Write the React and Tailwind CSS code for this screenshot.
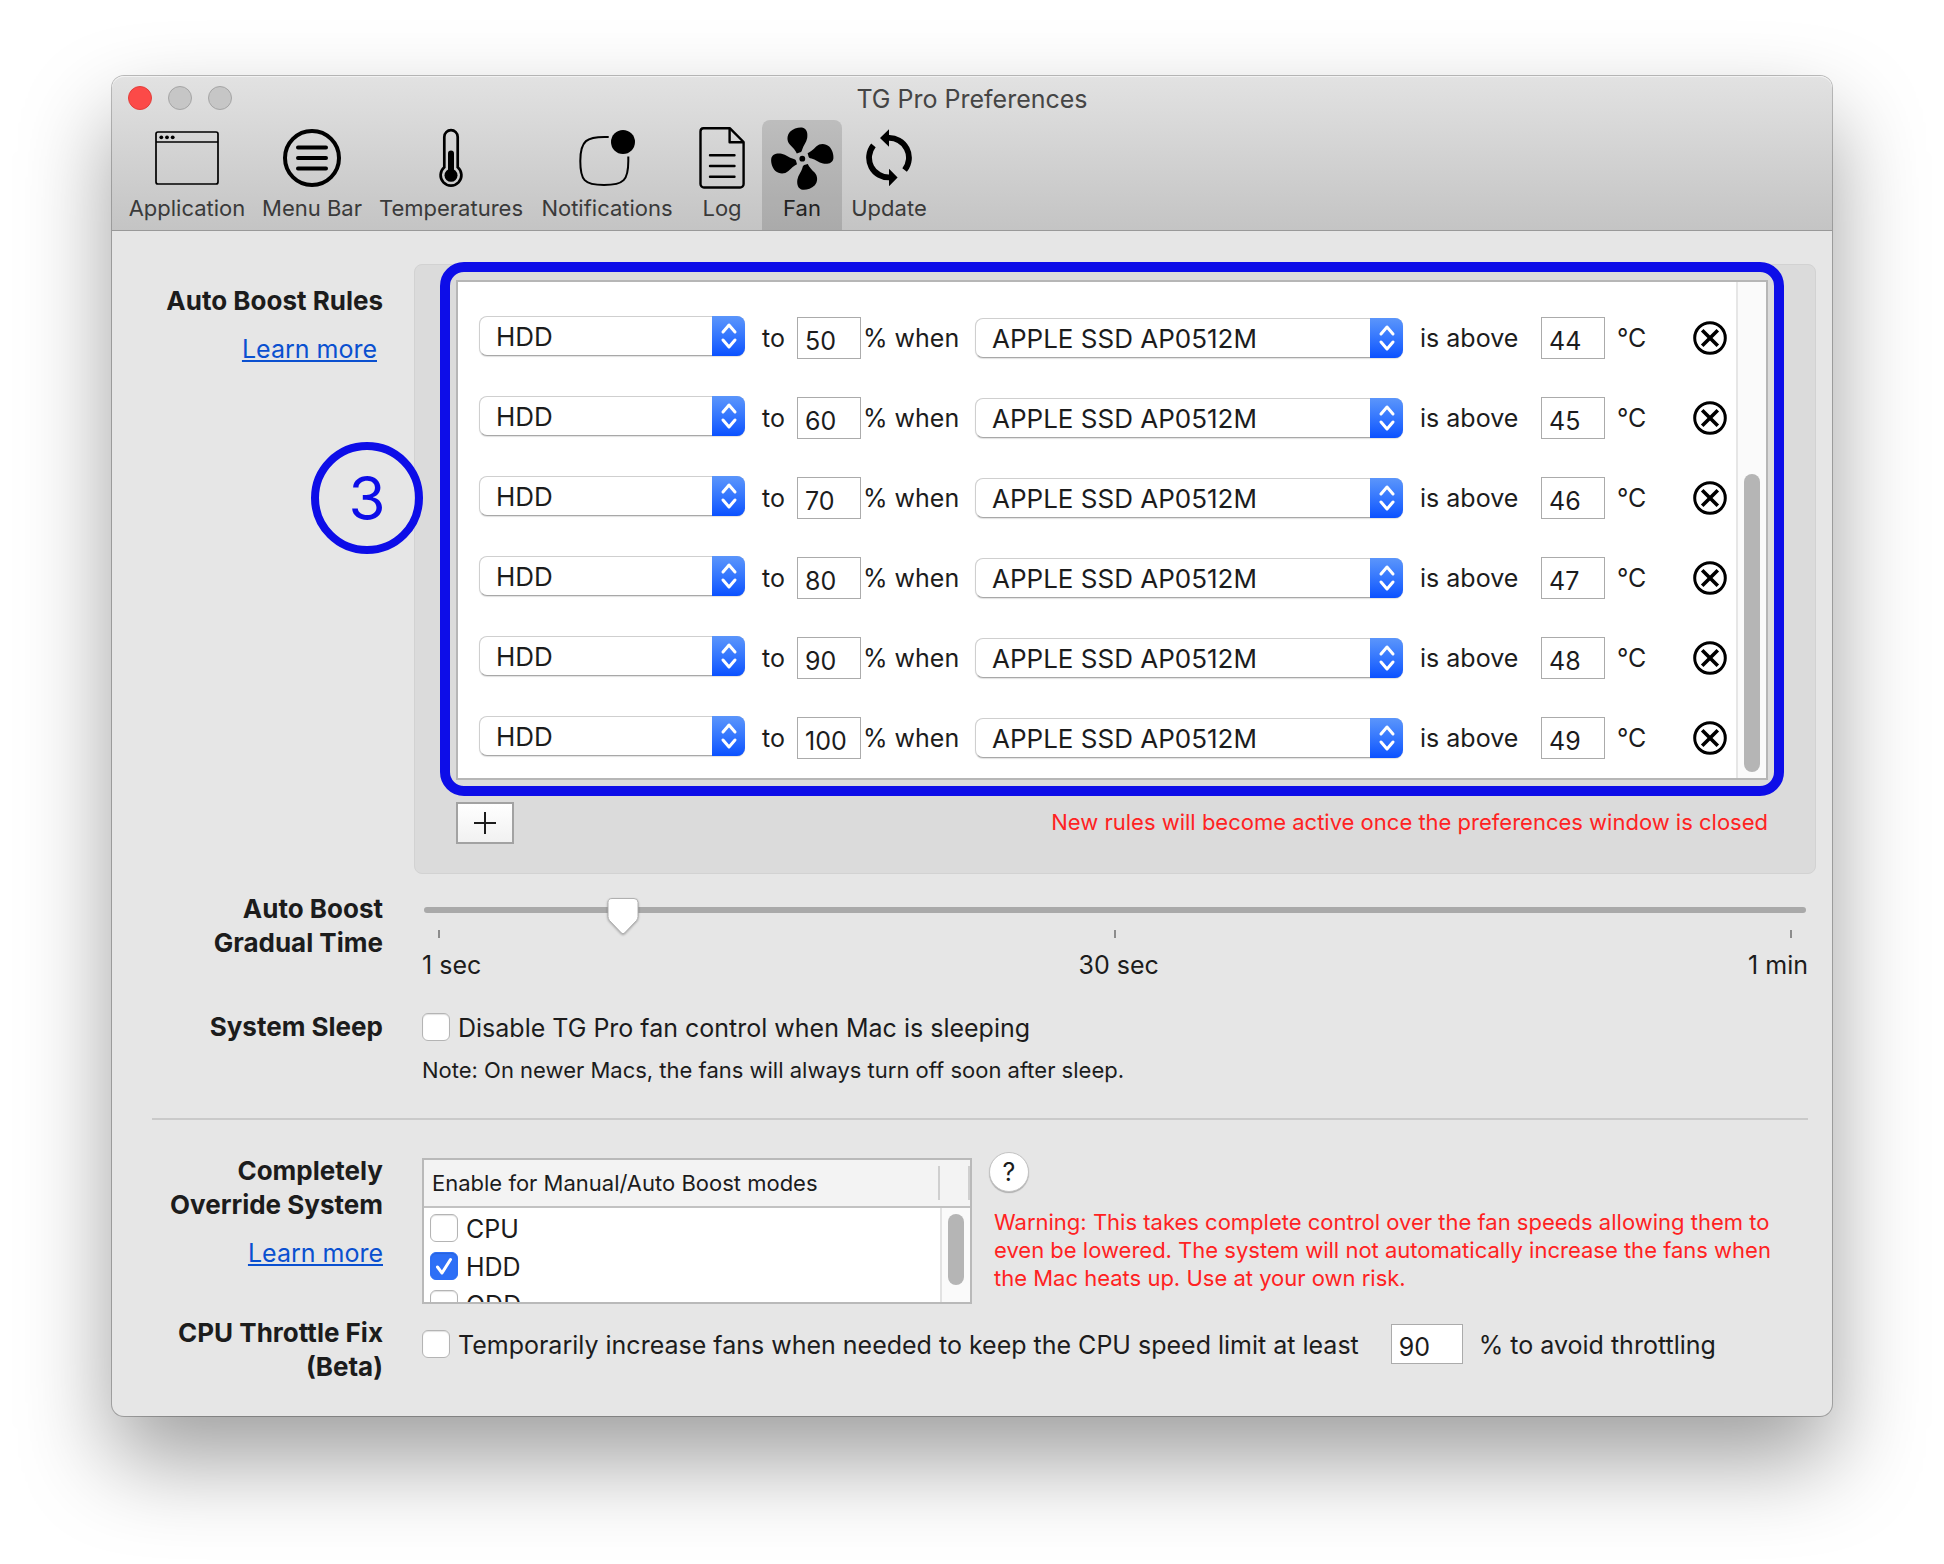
import React, { useState } from 'react';

const initialRules = [
    { id: 1, fan: "HDD", percent: "50", sensor: "APPLE SSD AP0512M", temp: "44" },
    { id: 2, fan: "HDD", percent: "60", sensor: "APPLE SSD AP0512M", temp: "45" },
    { id: 3, fan: "HDD", percent: "70", sensor: "APPLE SSD AP0512M", temp: "46" },
    { id: 4, fan: "HDD", percent: "80", sensor: "APPLE SSD AP0512M", temp: "47" },
    { id: 5, fan: "HDD", percent: "90", sensor: "APPLE SSD AP0512M", temp: "48" },
    { id: 6, fan: "HDD", percent: "100", sensor: "APPLE SSD AP0512M", temp: "49" }
];

const ApplicationIcon = () => (
    <svg width="64" height="56" viewBox="0 0 64 56" fill="none" stroke="black" strokeWidth="1.7">
        <rect x="1" y="2" width="62" height="52" rx="2" />
        <path d="M1 12h62" />
        <g fill="black" stroke="none">
            <circle cx="6.3" cy="7.3" r="1.9" />
            <circle cx="12" cy="7.3" r="1.9" />
            <circle cx="17.7" cy="7.3" r="1.9" />
        </g>
    </svg>
);

const MenuBarIcon = () => (
    <svg width="60" height="60" viewBox="0 0 60 60" fill="none" stroke="black" strokeWidth="4" strokeLinecap="round">
        <circle cx="30" cy="30" r="27" />
        <path d="M16 19.5h28M16 30h28M16 40.5h28" />
    </svg>
);

const TemperaturesIcon = () => (
    <svg width="26" height="60" viewBox="0 0 26 60" fill="none" stroke="black" strokeWidth="2.7">
        <path d="M6.3 39.3V8.9a6.7 6.7 0 0 1 13.4 0V39.3A10.4 10.4 0 1 1 6.3 39.3z" />
        <path d="M13 25.5V46" strokeWidth="6" strokeLinecap="round" />
        <circle cx="13" cy="47.3" r="6.5" fill="black" stroke="none" />
    </svg>
);

const NotificationsIcon = () => (
    <svg width="58" height="60" viewBox="0 0 58 60" fill="none" stroke="black" strokeWidth="2">
        <path d="M30.7 9C8 8 2.3 13 2.3 33C2.3 52 6 57 26 57C46 57 50.3 52 50.3 33V28.5" />
        <circle cx="45" cy="14" r="12" fill="black" stroke="none" />
    </svg>
);

const LogIcon = () => (
    <svg width="48" height="64" viewBox="0 0 48 64" fill="none" stroke="black" strokeWidth="2.4" strokeLinejoin="round">
        <path d="M5.5 2.3H32L45.6 16V58a3.5 3.5 0 0 1-3.5 3.5H6A3.5 3.5 0 0 1 2.5 58V5.5A3.2 3.2 0 0 1 5.5 2.3z" />
        <path d="M31.6 2.3V16.2H45.6" />
        <path d="M12 29.3h24.5M12 40h24.5M12 50.7h24.5" strokeLinecap="round" />
    </svg>
);

const blade = "M26.8 27.4C25.5 24.5 23 21.8 20 18.8C16.5 15 16.8 9.5 20 5.8C23 2.6 28.5 1.2 32 1.6C36.5 2.4 38 6.5 37.2 12C36.4 16.5 33.2 19.5 32.2 23.5C31.8 25.5 31 26.4 29.5 26.6z";

const FanIcon = () => (
    <svg width="64" height="64" viewBox="0 0 64 64" fill="black">
        <path d={blade} />
        <path d={blade} transform="rotate(90 32.3 32.7)" />
        <path d={blade} transform="rotate(180 32.3 32.7)" />
        <path d={blade} transform="rotate(270 32.3 32.7)" />
        <circle cx="32.3" cy="32.7" r="2.9" />
    </svg>
);

const UpdateIcon = () => (
    <svg width="46" height="60" viewBox="0 0 46 60">
        <g fill="none" stroke="black" strokeWidth="5.8">
            <path d="M22 10A19.7 19.7 0 0 1 38.6 42" />
            <path d="M24 49.4A19.7 19.7 0 0 1 7.4 17.4" />
        </g>
        <path d="M14 10L23 1.3V18.7zM31.6 49.4L23 40.7V58.3z" />
    </svg>
);

const toolbarItems = [
    { label: "Application", icon: ApplicationIcon, width: "w-[134px]" },
    { label: "Menu Bar", icon: MenuBarIcon, width: "w-[116px]" },
    { label: "Temperatures", icon: TemperaturesIcon, width: "w-[162px]" },
    { label: "Notifications", icon: NotificationsIcon, width: "w-[150px]" },
    { label: "Log", icon: LogIcon, width: "w-20" },
    { label: "Fan", icon: FanIcon, width: "w-20" },
    { label: "Update", icon: UpdateIcon, width: "w-[94px]" }
];

function PopUp({ label, value, options, className }) {
    return (
        <div className={`relative h-10 rounded-lg ${className}`}>
            <select
                aria-label={label}
                defaultValue={value}
                className="block w-full h-full appearance-none rounded-lg border border-[#cfcfcf] border-b-[#a8a8a8] bg-white pt-[2px] pl-4 pr-10 text-[26px] leading-[30px] font-normal shadow-[0_1px_1px_rgba(0,0,0,0.12)]"
            >
                {options.map((option) => <option key={option}>{option}</option>)}
            </select>
            <span className="pointer-events-none absolute inset-y-0 right-0 flex w-[33px] items-center justify-center rounded-r-lg bg-linear-to-b from-[#5b95fb] to-[#0a50ff]">
                <svg width="18" height="28" viewBox="0 0 18 28" fill="none" stroke="white" strokeWidth="3" strokeLinecap="round" strokeLinejoin="round">
                    <path d="M3 10L9 3L15 10M3 18L9 25L15 18" />
                </svg>
            </span>
        </div>
    );
}

function NumberField({ label, value, className }) {
    return (
        <input
            type="text"
            aria-label={label}
            defaultValue={value}
            className={`border border-[#ababab] bg-white pt-[6px] pl-[7px] text-[25px] leading-[30px] ${className}`}
        />
    );
}

function CheckBox({ id, label, checked, onChange }) {
    return (
        <div className="flex items-center gap-2">
            <span className="relative flex size-7 shrink-0">
                <input
                    id={id}
                    type="checkbox"
                    checked={checked}
                    onChange={onChange}
                    className="size-7 appearance-none rounded-md border border-[#b4b4b4] bg-white shadow-[inset_0_1px_1px_rgba(0,0,0,0.12)] checked:border-[#2d6ff6] checked:bg-[#2d6ff6]"
                />
                {checked && (
                    <svg className="pointer-events-none absolute inset-0" width="28" height="28" viewBox="0 0 28 28" fill="none" stroke="white" strokeWidth="3" strokeLinecap="round" strokeLinejoin="round">
                        <path d="M7.5 15L12 21L20.5 7.5" />
                    </svg>
                )}
            </span>
            <label htmlFor={id} className="pt-[2px] text-[25px] leading-7">{label}</label>
        </div>
    );
}

function RuleRow({ rule, onRemove }) {
    return (
        <li className="flex h-20 items-center pl-[21px] pr-[9px]">
            <div className="w-[266px] pb-1">
                <PopUp label="Fan" value={rule.fan} options={["HDD", "CPU", "ODD"]} className="w-full" />
            </div>
            <span className="ml-[17px] w-[35px]">to</span>
            <NumberField label="Fan speed percent" value={rule.percent} className="h-[42px] w-16" />
            <span className="ml-[2px] w-[112px] whitespace-nowrap">% when</span>
            <PopUp label="Sensor" value={rule.sensor} options={["APPLE SSD AP0512M", "CPU Proximity"]} className="flex-1" />
            <span className="ml-[17px] w-[121px] whitespace-nowrap">is above</span>
            <NumberField label="Temperature" value={rule.temp} className="h-[42px] w-16" />
            <span className="ml-3 w-[76px]">°C</span>
            <button type="button" aria-label="Remove rule" onClick={onRemove}>
                <svg width="34" height="34" viewBox="0 0 34 34" fill="none" stroke="black" strokeWidth="3">
                    <circle cx="17" cy="17" r="15.3" />
                    <path d="M9.2 9.2L24.8 24.8M24.8 9.2L9.2 24.8" strokeWidth="3.6" />
                </svg>
            </button>
        </li>
    );
}

export default function App() {
    const [activeTab, setActiveTab] = useState("Fan");
    const [rules, setRules] = useState(initialRules);
    const [gradualTime, setGradualTime] = useState(9);
    const [disableOnSleep, setDisableOnSleep] = useState(false);
    const [throttleFix, setThrottleFix] = useState(false);
    const [overrides, setOverrides] = useState({ CPU: false, HDD: true, ODD: false });

    const addRule = () => {
        setRules([...rules, { ...rules[rules.length - 1], id: Date.now() }]);
    };

    const sliderRatio = (gradualTime - 1) / 59;

    return (
        <div className="min-h-screen bg-white px-28 pt-19 pb-[148px] font-['Inter',sans-serif] text-[25px] leading-[34px] font-[425] text-[#1c1c1c]">
            <div className="rounded-xl bg-[#e6e6e6] pb-8 shadow-[0_0_0_1px_rgba(0,0,0,0.25),0_44px_90px_rgba(0,0,0,0.38)]">
                <header className="rounded-t-xl border-b border-[#999] bg-linear-to-b from-[#e2e2e2] to-[#c4c4c4] shadow-[inset_0_1px_0_#f2f2f2]">
                    <div className="grid h-11 grid-cols-3 items-center px-4">
                        <div className="flex gap-4">
                            <button type="button" aria-label="Close" className="size-6 rounded-full border border-[#e33e3a] bg-[#fc4a48]" />
                            <button type="button" aria-label="Minimize" className="size-6 rounded-full border border-[#a5a5a5] bg-[#c6c6c6]" />
                            <button type="button" aria-label="Zoom" className="size-6 rounded-full border border-[#a5a5a5] bg-[#c6c6c6]" />
                        </div>
                        <h1 className="pt-[2px] text-center text-[#454545]">TG Pro Preferences</h1>
                    </div>
                    <nav className="flex pl-2">
                        {toolbarItems.map(({ label, icon: Icon, width }) => (
                            <button
                                key={label}
                                type="button"
                                onClick={() => setActiveTab(label)}
                                className={`flex h-[110px] flex-col items-center rounded-t-lg pt-[6px] ${width} ${activeTab === label ? "bg-black/13 text-[#222]" : "text-[#3a3a3a]"}`}
                            >
                                <span className="flex h-16 items-center"><Icon /></span>
                                <span className="mt-1 text-[22px] leading-7">{label}</span>
                            </button>
                        ))}
                    </nav>
                </header>

                <main className="pr-6">
                    <section className="grid grid-cols-[271px_1fr] gap-x-[39px] pt-[33px]">
                        <div className="pt-5 text-right">
                            <h2 className="text-[26px] font-bold">Auto Boost Rules</h2>
                            <a href="#auto-boost" className="mt-[14px] mr-[6px] inline-block text-[#0a50d0] underline decoration-2 underline-offset-2">Learn more</a>
                        </div>
                        <div className="relative -mx-2 rounded-lg border border-[#d2d2d2] bg-[#dbdbdb] pt-[15px] pr-[47px] pb-[29px] pl-[41px]">
                            <div className="flex border-2 border-[#b6b6b6] bg-white">
                                <ul className="flex-1 pt-4">
                                    {rules.map((rule) => (
                                        <RuleRow
                                            key={rule.id}
                                            rule={rule}
                                            onRemove={() => setRules(rules.filter((r) => r.id !== rule.id))}
                                        />
                                    ))}
                                </ul>
                                <div className="flex w-[30px] flex-col justify-end border-l-2 border-[#e6e6e6] bg-[#fafafa] px-[6px] pb-[6px]">
                                    <div className="h-[298px] rounded-full bg-[#b5b5b5]" />
                                </div>
                            </div>
                            <div className="mt-[22px] flex items-start justify-between">
                                <button
                                    type="button"
                                    aria-label="Add rule"
                                    onClick={addRule}
                                    className="flex h-[42px] w-[58px] items-center justify-center border-2 border-[#a2a2a2] bg-linear-to-b from-white to-[#f1f1f1]"
                                >
                                    <svg width="22" height="22" viewBox="0 0 22 22" stroke="#1c1c1c" strokeWidth="2">
                                        <path d="M11 0v22M0 11h22" />
                                    </svg>
                                </button>
                                <p className="pt-1 text-[22px] leading-8 font-normal text-[#ff2222]">New rules will become active once the preferences window is closed</p>
                            </div>
                            {/* callout frame and step number */}
                            <div className="pointer-events-none absolute -top-[3px] right-[31px] bottom-[77px] left-[25px] rounded-3xl border-10 border-[#0d0de8]" />
                            <div className="absolute top-[177px] -left-[104px] flex size-28 items-center justify-center rounded-full border-8 border-[#0d0de8] text-[60px] leading-none font-normal text-[#0d0de8]">3</div>
                        </div>
                    </section>

                    <section className="grid grid-cols-[271px_1fr] gap-x-[39px] pt-[18px]">
                        <h2 className="text-right text-[26px] font-bold">Auto Boost<br />Gradual Time</h2>
                        <div className="pt-[6px]">
                            <div className="relative mx-[2px] flex h-9 items-start">
                                <input
                                    type="range"
                                    aria-label="Auto Boost Gradual Time"
                                    min="1"
                                    max="60"
                                    value={gradualTime}
                                    onChange={(e) => setGradualTime(Number(e.target.value))}
                                    className="mt-[9px] block h-[6px] w-full appearance-none rounded-full bg-[#a9a9a9] [&::-webkit-slider-thumb]:h-9 [&::-webkit-slider-thumb]:w-8 [&::-webkit-slider-thumb]:appearance-none [&::-webkit-slider-thumb]:bg-transparent"
                                />
                                <svg
                                    className="pointer-events-none absolute top-0 drop-shadow-[0_1px_1px_rgba(0,0,0,0.3)]"
                                    style={{ left: `calc((100% - 32px) * ${sliderRatio})` }}
                                    width="32" height="38" viewBox="0 0 32 38" fill="white" stroke="#b0b0b0" strokeWidth="1"
                                >
                                    <path d="M5 .5H27A4 4 0 0 1 31 4.5V18.5Q31 20.5 29.5 22.5L17.5 35Q16 36.5 14.5 35L2.5 22.5Q1 20.5 1 18.5V4.5A4 4 0 0 1 5 .5z" />
                                </svg>
                            </div>
                            <div className="-mt-1 flex justify-between px-4">
                                <span className="h-2 w-[2px] bg-[#8c8c8c]" />
                                <span className="h-2 w-[2px] bg-[#8c8c8c]" />
                                <span className="h-2 w-[2px] bg-[#8c8c8c]" />
                            </div>
                            <div className="mt-[10px] flex justify-between">
                                <span>1 sec</span>
                                <span className="pl-2">30 sec</span>
                                <span>1 min</span>
                            </div>
                        </div>
                    </section>

                    <section className="grid grid-cols-[271px_1fr] gap-x-[39px] pt-7">
                        <h2 className="text-right text-[26px] font-bold">System Sleep</h2>
                        <div className="pt-[2px]">
                            <CheckBox
                                id="sleep"
                                label="Disable TG Pro fan control when Mac is sleeping"
                                checked={disableOnSleep}
                                onChange={() => setDisableOnSleep(!disableOnSleep)}
                            />
                            <p className="mt-[14px] text-[22px] leading-7 font-normal">Note: On newer Macs, the fans will always turn off soon after sleep.</p>
                        </div>
                    </section>

                    <hr className="mt-[34px] ml-10 border-t-2 border-[#cacaca]" />

                    <section className="grid grid-cols-[271px_550px_1fr] pt-8">
                        <div className="pt-[2px] text-right">
                            <h2 className="text-[26px] font-bold">Completely<br />Override System</h2>
                            <a href="#override" className="mt-[14px] inline-block text-[#0a50d0] underline decoration-2 underline-offset-2">Learn more</a>
                        </div>
                        <div className="ml-[39px] mt-[6px] h-[146px] w-[550px] overflow-hidden border-2 border-[#b9b9b9] bg-white">
                            <div className="flex h-12 items-center border-b-2 border-[#c2c2c2] bg-[#f3f3f3] pl-2">
                                <span className="flex-1 text-[22px] leading-7 font-normal">Enable for Manual/Auto Boost modes</span>
                                <span className="h-[34px] w-8 border-x-2 border-[#cfcfcf]" />
                            </div>
                            <div className="flex h-24">
                                <div className="flex flex-1 flex-col gap-2 pt-[5px] pl-[6px]">
                                    {Object.keys(overrides).map((name) => (
                                        <CheckBox
                                            key={name}
                                            id={`override-${name}`}
                                            label={name}
                                            checked={overrides[name]}
                                            onChange={() => setOverrides({ ...overrides, [name]: !overrides[name] })}
                                        />
                                    ))}
                                </div>
                                <div className="w-[30px] border-l-2 border-[#e2e2e2] bg-[#fafafa] px-[6px] pt-[6px]">
                                    <div className="h-[71px] rounded-full bg-[#b5b5b5]" />
                                </div>
                            </div>
                        </div>
                        <div className="pl-14">
                            <button type="button" className="flex size-10 items-center justify-center rounded-full border border-[#c4c4c4] bg-white shadow-[0_1px_1px_rgba(0,0,0,0.25)]">?</button>
                            <p className="mt-4 pl-[5px] text-[22px] leading-7 font-normal whitespace-nowrap text-[#ff2222]">
                                Warning: This takes complete control over the fan speeds allowing them to<br />
                                even be lowered. The system will not automatically increase the fans when<br />
                                the Mac heats up. Use at your own risk.
                            </p>
                        </div>
                    </section>

                    <section className="grid grid-cols-[271px_1fr] gap-x-[39px] pt-3">
                        <h2 className="text-right text-[26px] font-bold">CPU Throttle Fix<br />(Beta)</h2>
                        <div className="flex h-14 items-center">
                            <CheckBox
                                id="throttle"
                                label="Temporarily increase fans when needed to keep the CPU speed limit at least"
                                checked={throttleFix}
                                onChange={() => setThrottleFix(!throttleFix)}
                            />
                            <NumberField label="CPU speed limit percent" value="90" className="ml-8 h-10 w-[72px]" />
                            <span className="ml-4 pt-[2px]">% to avoid throttling</span>
                        </div>
                    </section>
                </main>
            </div>
        </div>
    );
}
